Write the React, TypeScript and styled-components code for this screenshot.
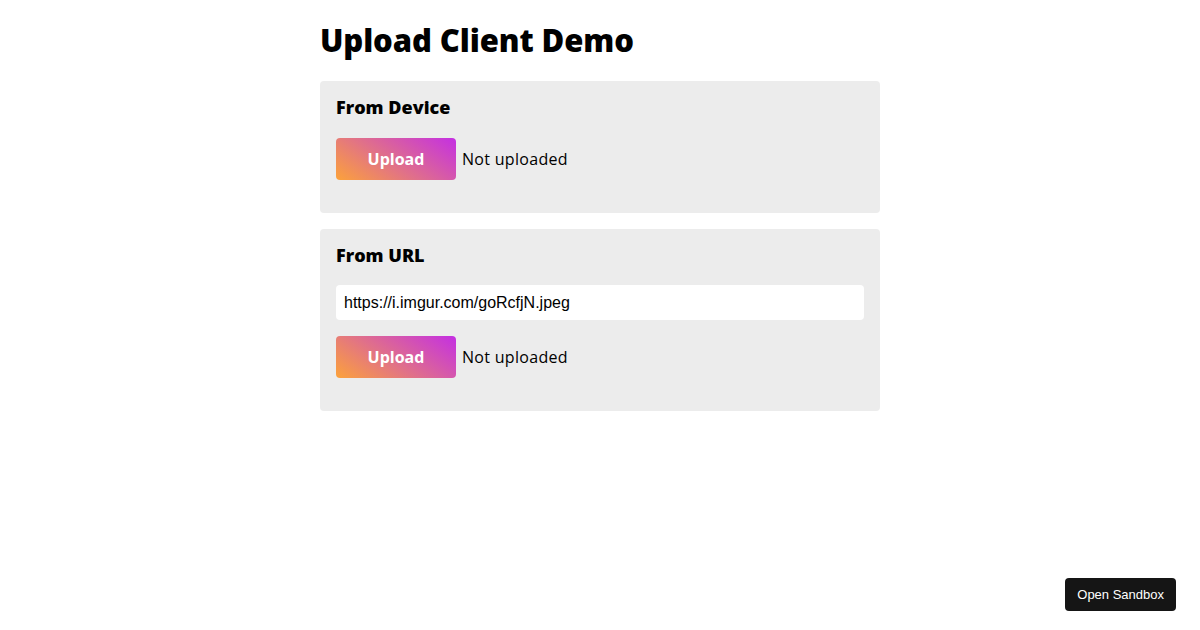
import styled, { createGlobalStyle } from "styled-components";

const Global = createGlobalStyle`
  html, body { margin: 0; padding: 0; background: #fff; }
  body { font-family: "Open Sans", "DejaVu Sans", sans-serif; color: #000; }
`;

const Page = styled.div`
  width: 560px;
  margin: 0 auto;
  padding-top: 20px;
  display: flex;
  flex-direction: column;
  gap: 16px;
`;

const Title = styled.h1`
  margin: 0 0 5px;
  font-size: 31px;
  font-weight: 800;
  line-height: 40px;
  letter-spacing: -0.1px;
`;

const Card = styled.section`
  background: #ececec;
  border-radius: 4px;
  padding: 16px 16px 33px;
  display: flex;
  flex-direction: column;
`;

const CardTitle = styled.h3<{ $gap?: number }>`
  margin: 0 0 ${(p) => p.$gap ?? 20}px;
  font-size: 18px;
  font-weight: 800;
  line-height: 20px;
`;

const UrlInput = styled.input`
  box-sizing: border-box;
  height: 35px;
  width: 100%;
  margin-bottom: 16px;
  border: none;
  border-radius: 4px;
  padding: 0 8px;
  background: #fff;
  font-family: "Liberation Sans", Arial, sans-serif;
  font-size: 16px;
  color: #000;
  outline: none;
`;

const Row = styled.div`
  display: flex;
  align-items: center;
  gap: 6px;
`;

const UploadButton = styled.button`
  width: 120px;
  height: 42px;
  border: none;
  border-radius: 4px;
  background: linear-gradient(35deg, #fca23a 0%, #e0708a 45%, #c42fe3 100%);
  color: #fff;
  font-family: "Open Sans", sans-serif;
  font-size: 16px;
  font-weight: 700;
  cursor: pointer;
`;

const Status = styled.span`
  font-size: 16px;
  letter-spacing: 0.3px;
`;

const SandboxButton = styled.button`
  position: fixed;
  right: 24px;
  bottom: 19px;
  height: 33px;
  padding: 0 12px;
  border: none;
  border-radius: 4px;
  background: #151515;
  color: #fff;
  font-family: "Liberation Sans", Arial, sans-serif;
  font-size: 13px;
`;

export default function App() {
  return (
    <>
      <Global />
      <Page>
        <Title>Upload Client Demo</Title>
        <Card>
          <CardTitle $gap={21}>From Device</CardTitle>
          <Row>
            <UploadButton>Upload</UploadButton>
            <Status>Not uploaded</Status>
          </Row>
        </Card>
        <Card>
          <CardTitle>From URL</CardTitle>
          <UrlInput defaultValue="https://i.imgur.com/goRcfjN.jpeg" />
          <Row>
            <UploadButton>Upload</UploadButton>
            <Status>Not uploaded</Status>
          </Row>
        </Card>
      </Page>
      <SandboxButton>Open Sandbox</SandboxButton>
    </>
  );
}
